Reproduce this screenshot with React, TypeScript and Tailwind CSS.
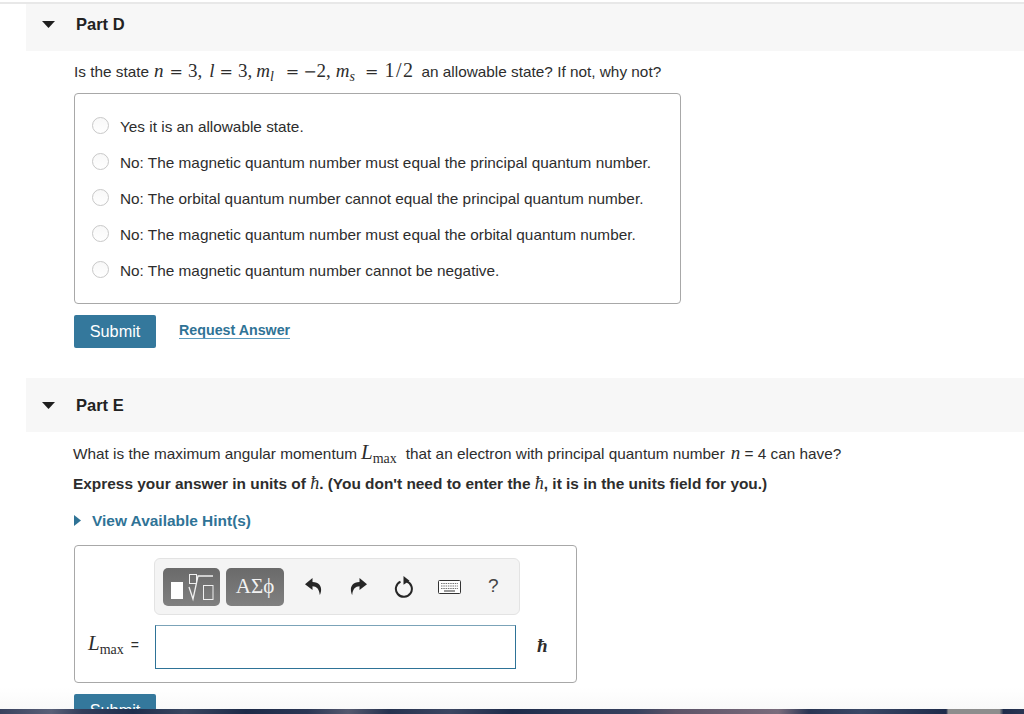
import React from 'react';

const choices = [
  'Yes it is an allowable state.',
  'No: The magnetic quantum number must equal the principal quantum number.',
  'No: The orbital quantum number cannot equal the principal quantum number.',
  'No: The magnetic quantum number must equal the orbital quantum number.',
  'No: The magnetic quantum number cannot be negative.',
];

// math atoms, spaced by hand since there is no math font here
const V: React.FC<{ children: React.ReactNode; className?: string }> = ({ children, className = '' }) => (
  <span className={`font-['Liberation_Serif',serif] text-[19px] italic ${className}`}>{children}</span>
);
const N: React.FC<{ children: React.ReactNode; className?: string }> = ({ children, className = '' }) => (
  <span className={`font-['Liberation_Serif',serif] text-[19px] ${className}`}>{children}</span>
);
const Op: React.FC<{ children: React.ReactNode; className?: string }> = ({ children, className = '' }) => (
  <span className={`font-['DejaVu_Serif',serif] text-[16px] font-light ${className}`}>{children}</span>
);
const Sub: React.FC<{ children: React.ReactNode; italic?: boolean; className?: string }> = ({ children, italic, className = '' }) => (
  <span className={`relative top-[4px] font-['Liberation_Serif',serif] text-[14px] leading-none ${italic ? 'italic' : ''} ${className}`}>{children}</span>
);
const Hbar: React.FC = () => (
  <span className="font-['Liberation_Serif',serif] text-[18px] font-normal italic">ħ</span>
);

const PartHeader: React.FC<{ label: string; className: string }> = ({ label, className }) => (
  <div className={`ml-[26px] flex items-center bg-[#f7f7f7] ${className}`}>
    <svg width="13" height="7" viewBox="0 0 13 7" className="ml-[16px] mr-[21px] shrink-0">
      <path d="M0 0h13L6.5 7z" fill="#1f1f1f" />
    </svg>
    <span className="text-[16.5px] font-bold text-[#222]">{label}</span>
  </div>
);

const ToolButton: React.FC<{ children: React.ReactNode; className: string }> = ({ children, className }) => (
  <div className={`flex h-[38px] items-center justify-center rounded-[5px] bg-gradient-to-b from-[#6a6a6a] to-[#808080] ${className}`}>
    {children}
  </div>
);

const Arrow: React.FC<{ className: string }> = ({ className }) => (
  <svg width="17" height="17" viewBox="0 0 17 17" className={className}>
    <path d="M9.5 0L17 6.2 9.5 12V8.3C5.5 8.3 2.8 11 2.2 17 0 13-.5 4.2 9.5 4z" fill="#262626" />
  </svg>
);

export default function App() {
  return (
    <div className="relative h-[714px] w-[1024px] overflow-hidden bg-white font-['Liberation_Sans',Arial,sans-serif] text-[15.35px] text-[#2d2d2d]">
      <div className="absolute inset-x-0 bottom-[5px] h-[22px] bg-gradient-to-b from-white to-[#f9f9f9]" />

      <div className="mt-[2px] h-[2px] bg-[#e8e8e8]" />
      <PartHeader label="Part D" className="h-[47px] pb-[6px]" />

      <div className="ml-[74px]">
        <p className="mt-[6px] h-[26px] leading-[26px] whitespace-nowrap">
          Is the state
          <V className="ml-[5px]">n</V>
          <Op className="ml-[6px]">=</Op>
          <N className="ml-[5px]">3,</N>
          <V className="ml-[7px]">l</V>
          <Op className="ml-[5px]">=</Op>
          <N className="ml-[5px]">3,</N>
          <V className="ml-[4px]">m</V>
          <Sub italic>l</Sub>
          <Op className="ml-[12px]">=</Op>
          <Op className="ml-[4px]">−</Op>
          <N>2,</N>
          <V className="ml-[5px]">m</V>
          <Sub italic>s</Sub>
          <Op className="ml-[10px]">=</Op>
          <N className="ml-[6px] text-[20px] tracking-[1.5px]">1/2</N>
          <span className="ml-[7px]">an allowable state? If not, why not?</span>
        </p>

        <div className="mt-[10px] h-[211px] w-[607px] rounded-[4px] border border-[#a8a8a8] pt-[13px]">
          {choices.map(choice => (
            <div key={choice} className="flex h-[36px] items-center">
              <span className="ml-[17px] h-[17px] w-[17px] shrink-0 rounded-full border border-[#c8c8c8] bg-gradient-to-b from-[#f8f8f8] to-white" />
              <span className="relative top-[2px] ml-[11px] whitespace-nowrap">{choice}</span>
            </div>
          ))}
        </div>

        <div className="mt-[11px] flex items-center">
          <button className="h-[33px] w-[82px] rounded-[2px] bg-[#34789c] text-[16.3px] text-white">Submit</button>
          <a className="ml-[23px] -mt-[2px] border-b border-[#5b9bbd] text-[14.25px] leading-[15px] font-bold text-[#2f7396]">Request Answer</a>
        </div>
      </div>

      <PartHeader label="Part E" className="mt-[30px] h-[54px]" />

      <div className="ml-[74px]">
        <p className="mt-[7px] -ml-px h-[27px] leading-[27px] whitespace-nowrap">
          What is the maximum angular momentum
          <V className="ml-[4px] text-[21px]">L</V>
          <Sub>max</Sub>
          <span className="ml-[9px]">that an electron with principal quantum number</span>
          <V className="ml-[6px]">n</V> = 4 can have?
        </p>
        <p className="mt-[4px] -ml-px h-[27px] text-[15.42px] leading-[27px] font-bold whitespace-nowrap">
          Express your answer in units of <Hbar />. (You don't need to enter the <Hbar />, it is in the units field for you.)
        </p>
        <div className="mt-[10px] flex h-[27px] items-center text-[15.45px] font-bold text-[#2f7396]">
          <svg width="7" height="11" viewBox="0 0 7 11" className="mr-[11px] shrink-0">
            <path d="M0 0l7 5.5L0 11z" fill="#2f7396" />
          </svg>
          View Available Hint(s)
        </div>

        <div className="mt-[11px] h-[138px] w-[503px] rounded-[4px] border border-[#a8a8a8] pt-[12px]">
          <div className="ml-[79px] flex h-[57px] w-[366px] items-center rounded-[6px] border border-[#e3e3e3] bg-[#f4f4f4] pl-[8px]">
            <ToolButton className="w-[57px]">
              <svg width="57" height="38" viewBox="0 0 57 38">
                <rect x="8" y="14" width="12" height="17" fill="#fff" />
                <path d="M26 19l4 12 5-23h15" fill="none" stroke="#f0f0f0" strokeWidth="1.3" />
                <rect x="26.5" y="6.5" width="7" height="9" fill="none" stroke="#f0f0f0" />
                <rect x="40.5" y="17.5" width="9.5" height="14" fill="none" stroke="#f0f0f0" />
              </svg>
            </ToolButton>
            <ToolButton className="ml-[6px] w-[58px]">
              <span className="font-['Liberation_Serif',serif] text-[21px] text-[#f2f2f2]">ΑΣϕ</span>
            </ToolButton>
            <Arrow className="ml-[21px] -scale-x-100" />
            <Arrow className="ml-[28px]" />
            <svg width="20" height="23" viewBox="0 0 20 23" className="ml-[27px]">
              <path d="M12.5 6.3A8 8 0 1 1 6.5 6.6" fill="none" stroke="#262626" strokeWidth="2" />
              <path d="M9.5 1l6 4.8-6 3.9z" fill="#262626" />
            </svg>
            <svg width="23" height="14" viewBox="0 0 23 14" className="ml-[24px]">
              <rect x="0.5" y="0.5" width="22" height="13" rx="1" fill="#fff" stroke="#333" />
              <path d="M3 3.5h17M3 6h17M3 8.5h17" stroke="#777" strokeWidth="1.2" strokeDasharray="1.5 0.8" />
              <path d="M6 11h11" stroke="#555" strokeWidth="1.2" />
            </svg>
            <span className="ml-[27px] text-[19px] text-[#444]">?</span>
          </div>

          <div className="mt-[10px] flex items-center">
            <span className="relative -top-[3px] ml-[13px] w-[67px] whitespace-nowrap">
              <V className="text-[21px]">L</V>
              <Sub>max</Sub>
              <span className="ml-[7px] text-[14px]">=</span>
            </span>
            <input className="h-[44px] w-[361px] border border-[#2e7397] border-t-[#7ba3b8] bg-white" />
            <span className="relative -top-[1px] ml-[21px] font-['Liberation_Serif',serif] text-[19px] font-bold italic">ħ</span>
          </div>
        </div>

        <button className="relative mt-[11px] h-[33px] w-[82px] rounded-[2px] bg-[#34789c] text-[16.3px] text-white">Submit</button>
      </div>

      <div className="absolute inset-x-0 bottom-0 h-[5px] bg-[linear-gradient(90deg,#39425e_0%,#5a6078_5%,#333d5a_8%,#1f2d4c_13%,#3a4660_18%,#1d2a48_24%,#2b3654_30%,#55596f_34%,#26324f_38%,#3c4662_44%,#1e2b4a_50%,#2c3856_56%,#37415e_62%,#5d5468_66%,#6f6274_72%,#7a6c7c_76%,#2a3553_79%,#3b4866_84%,#1e2b4a_92.4%,#8d8d8d_92.6%,#8d8d8d_97.6%,#1e2b4a_98%,#2a3553_100%)]" />
    </div>
  );
}
